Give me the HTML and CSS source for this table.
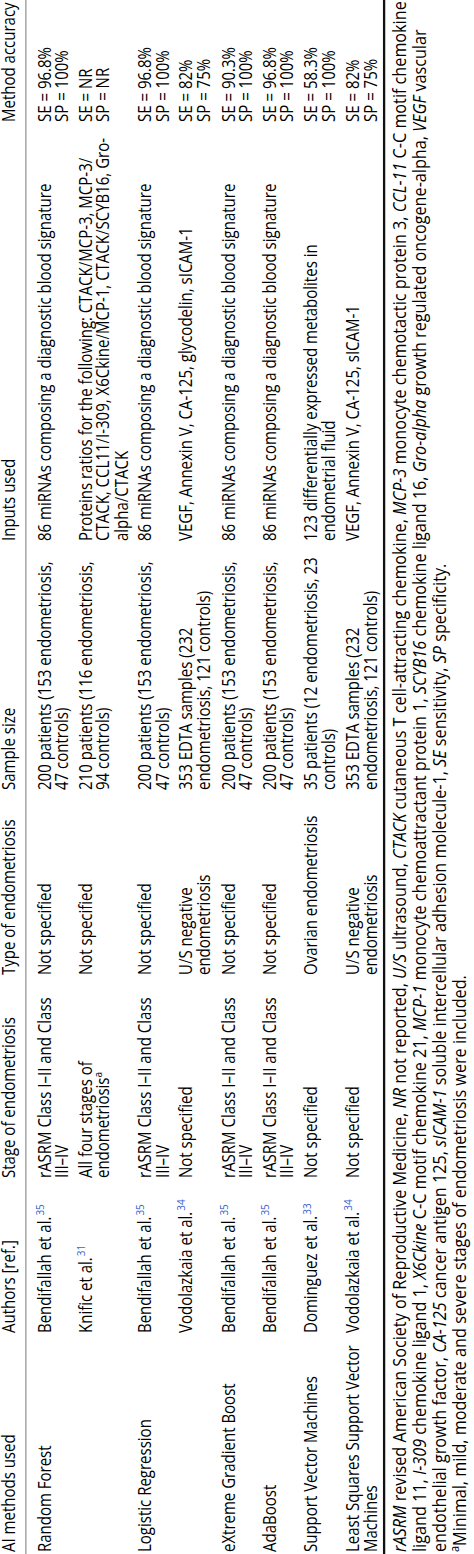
FILE: index.html
```html
<!DOCTYPE html>
<html lang="en">
<head>
<meta charset="utf-8">
<title>AI methods for endometriosis diagnosis</title>
<link rel="stylesheet" href="styles.css">
</head>
<body>
<div class="stage">
  <div class="sheet">
    <div class="row head">
      <div class="cell">AI methods used</div>
      <div class="cell">Authors [ref.]</div>
      <div class="cell">Stage of endometriosis</div>
      <div class="cell">Type of endometriosis</div>
      <div class="cell">Sample size</div>
      <div class="cell">Inputs used</div>
      <div class="cell">Method accuracy</div>
    </div>
    <div class="body">
      <div class="row">
        <div class="cell">Random Forest</div>
        <div class="cell">Bendifallah et al.<sup class="ref">35</sup></div>
        <div class="cell">rASRM Class I–II and Class<br>III–IV</div>
        <div class="cell">Not specified</div>
        <div class="cell">200 patients (153 endometriosis,<br>47 controls)</div>
        <div class="cell">86 miRNAs composing a diagnostic blood signature</div>
        <div class="cell">SE = 96.8%<br>SP = 100%</div>
      </div>
      <div class="row">
        <div class="cell"></div>
        <div class="cell">Knific et al.<sup class="ref">31</sup></div>
        <div class="cell">All four stages of<br>endometriosis<sup class="fn">a</sup></div>
        <div class="cell">Not specified</div>
        <div class="cell">210 patients (116 endometriosis,<br>94 controls)</div>
        <div class="cell">Proteins ratios for the following: CTACK/MCP-3, MCP-3/<br>CTACK, CCL11/I-309, X6Ckine/MCP-1, CTACK/SCYB16, Gro-<br>alpha/CTACK</div>
        <div class="cell">SE = NR<br>SP = NR</div>
      </div>
      <div class="row">
        <div class="cell">Logistic Regression</div>
        <div class="cell">Bendifallah et al.<sup class="ref">35</sup></div>
        <div class="cell">rASRM Class I–II and Class<br>III–IV</div>
        <div class="cell">Not specified</div>
        <div class="cell">200 patients (153 endometriosis,<br>47 controls)</div>
        <div class="cell">86 miRNAs composing a diagnostic blood signature</div>
        <div class="cell">SE = 96.8%<br>SP = 100%</div>
      </div>
      <div class="row">
        <div class="cell"></div>
        <div class="cell">Vodolazkaia et al.<sup class="ref">34</sup></div>
        <div class="cell">Not specified</div>
        <div class="cell">U/S negative<br>endometriosis</div>
        <div class="cell">353 EDTA samples (232<br>endometriosis, 121 controls)</div>
        <div class="cell">VEGF, Annexin V, CA-125, glycodelin, sICAM-1</div>
        <div class="cell">SE = 82%<br>SP = 75%</div>
      </div>
      <div class="row">
        <div class="cell">eXtreme Gradient Boost</div>
        <div class="cell">Bendifallah et al.<sup class="ref">35</sup></div>
        <div class="cell">rASRM Class I–II and Class<br>III–IV</div>
        <div class="cell">Not specified</div>
        <div class="cell">200 patients (153 endometriosis,<br>47 controls)</div>
        <div class="cell">86 miRNAs composing a diagnostic blood signature</div>
        <div class="cell">SE = 90.3%<br>SP = 100%</div>
      </div>
      <div class="row">
        <div class="cell">AdaBoost</div>
        <div class="cell">Bendifallah et al.<sup class="ref">35</sup></div>
        <div class="cell">rASRM Class I–II and Class<br>III–IV</div>
        <div class="cell">Not specified</div>
        <div class="cell">200 patients (153 endometriosis,<br>47 controls)</div>
        <div class="cell">86 miRNAs composing a diagnostic blood signature</div>
        <div class="cell">SE = 96.8%<br>SP = 100%</div>
      </div>
      <div class="row">
        <div class="cell">Support Vector Machines</div>
        <div class="cell">Dominguez et al.<sup class="ref">33</sup></div>
        <div class="cell">Not specified</div>
        <div class="cell">Ovarian endometriosis</div>
        <div class="cell">35 patients (12 endometriosis, 23<br>controls)</div>
        <div class="cell">123 differentially expressed metabolites in<br>endometrial fluid</div>
        <div class="cell">SE = 58.3%<br>SP = 100%</div>
      </div>
      <div class="row">
        <div class="cell">Least Squares Support Vector<br>Machines</div>
        <div class="cell">Vodolazkaia et al.<sup class="ref">34</sup></div>
        <div class="cell">Not specified</div>
        <div class="cell">U/S negative<br>endometriosis</div>
        <div class="cell">353 EDTA samples (232<br>endometriosis, 121 controls)</div>
        <div class="cell">VEGF, Annexin V, CA-125, sICAM-1</div>
        <div class="cell">SE = 82%<br>SP = 75%</div>
      </div>
    </div>
    <div class="notes">
      <p><i>rASRM</i> revised American Society of Reproductive Medicine, <i>NR</i> not reported, <i>U/S</i> ultrasound, <i>CTACK</i> cutaneous T cell-attracting chemokine, <i>MCP-3</i> monocyte chemotactic protein 3, <i>CCL-11</i> C-C motif chemokine<br>ligand 11, <i>I-309</i> chemokine ligand 1, <i>X6Ckine</i> C-C motif chemokine 21, <i>MCP-1</i> monocyte chemoattractant protein 1, <i>SCYB16</i> chemokine ligand 16, <i>Gro-alpha</i> growth regulated oncogene-alpha, <i>VEGF</i> vascular<br>endothelial growth factor, <i>CA-125</i> cancer antigen 125, <i>sICAM-1</i> soluble intercellular adhesion molecule-1, <i>SE</i> sensitivity, <i>SP</i> specificity.</p>
      <p><sup class="fn">a</sup>Minimal, mild, moderate and severe stages of endometriosis were included.</p>
    </div>
  </div>
</div>
</body>
</html>
```
FILE: styles.css
```css
html, body {
  margin: 0;
  padding: 0;
  background: #ffffff;
  overflow: hidden;
}

.stage {
  width: 474px;
  height: 1554px;
  overflow: hidden;
}

.sheet {
  width: 1554px;
  height: 412px;
  box-sizing: border-box;
  padding-left: 2px;
  font-family: "Open Sans", "Noto Sans", "DejaVu Sans", sans-serif;
  font-size: 15px;
  line-height: 15.65px;
  color: #000000;
  transform-origin: 0 0;
  transform: translateY(1554px) rotate(-90deg) scaleY(1.15);
}

.row {
  display: grid;
  grid-template-columns: 219px 155px 203px 185px 249px 419px 122px;
  align-items: start;
  padding: 2.4px 0;
}

.cell {
  white-space: nowrap;
}

.head {
  padding: 0.4px 0 5.6px;
  border-bottom: 1px solid #8a8a8a;
  margin-left: -2px;
  padding-left: 2px;
}

.body {
  padding-top: 5.5px;
  border-bottom: 2px solid #111111;
  margin-left: -2px;
  padding-left: 2px;
}

sup {
  line-height: 0;
  font-size: 10px;
  vertical-align: 6px;
}

.ref {
  color: #3b5fd0;
  margin-left: 1px;
}

.fn {
  color: #000000;
}

.notes {
  margin-top: 4.4px;
  font-size: 16.2px;
  line-height: 17.4px;
  white-space: nowrap;
}

.notes p {
  margin: 0;
}

.notes sup {
  font-size: 11px;
}
```
